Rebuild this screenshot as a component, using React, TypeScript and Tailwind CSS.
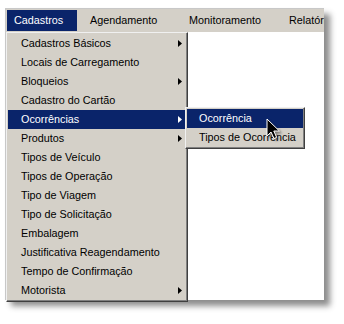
import type { ReactNode } from 'react';

const MENU_ITEMS: { label: string; sub?: boolean }[] = [
  { label: 'Cadastros Básicos', sub: true },
  { label: 'Locais de Carregamento' },
  { label: 'Bloqueios', sub: true },
  { label: 'Cadastro do Cartão' },
  { label: 'Ocorrências', sub: true },
  { label: 'Produtos', sub: true },
  { label: 'Tipos de Veículo' },
  { label: 'Tipos de Operação' },
  { label: 'Tipo de Viagem' },
  { label: 'Tipo de Solicitação' },
  { label: 'Embalagem' },
  { label: 'Justificativa Reagendamento' },
  { label: 'Tempo de Confirmação' },
  { label: 'Motorista', sub: true },
];

const ACTIVE = 4;

const SubArrow = ({ white }: { white?: boolean }): JSX.Element => (
  <svg width="4" height="7" viewBox="0 0 4 7" className="shrink-0">
    <path d="M0 0 L4 3.5 L0 7 Z" fill={white ? '#ffffff' : '#000000'} />
  </svg>
);

const BarItem = ({
  children,
  active,
  className,
}: {
  children: ReactNode;
  active?: boolean;
  className?: string;
}): JSX.Element => (
  <div
    className={
      'my-[1px] flex shrink-0 items-center whitespace-nowrap ' +
      (active ? 'bg-[#0a246a] text-white ' : 'text-black ') +
      (className ?? '')
    }
  >
    {children}
  </div>
);

const Cursor = (): JSX.Element => (
  <svg
    width="15"
    height="22"
    viewBox="0 0 15 22"
    className="absolute left-[260px] top-[109px] drop-shadow-[2px_2px_1px_rgba(0,0,0,0.4)]"
  >
    <path
      d="M1 1 L1 18 L5 14 L8 20.5 L10.6 19.4 L7.8 13 L13.4 13 Z"
      fill="#000000"
      stroke="#ffffff"
      strokeWidth="1"
      strokeLinejoin="round"
    />
  </svg>
);

export default function App(): JSX.Element {
  return (
    <div className="h-[324px] w-[344px] overflow-hidden bg-white pl-[5px] pt-[8px] font-['Liberation_Sans',Arial,sans-serif] text-[10.8px] leading-none">
      <div className="relative h-[292px] w-[319px] border-l border-t border-[#c8c8c8] bg-white shadow-[6px_6px_6px_rgba(0,0,0,0.45)]">
        {/* menu bar */}
        <div className="flex h-[23px] items-stretch overflow-hidden bg-[#d4d0c8]">
          <BarItem active className="ml-[1px] w-[70px] pl-[7px]">
            Cadastros
          </BarItem>
          <BarItem className="w-[99px] pl-[13px]">Agendamento</BarItem>
          <BarItem className="w-[100px] pl-[13px]">Monitoramento</BarItem>
          <BarItem className="pl-[13px]">Relatórios</BarItem>
        </div>

        {/* dropdown */}
        <div className="absolute left-0 top-[23px] w-[182px] border border-b-[#404040] border-l-[#f0f0f0] border-r-[#404040] border-t-[#f0f0f0] bg-[#d4d0c8] p-[1px] shadow-[inset_-1px_-1px_0_#808080]">
          {MENU_ITEMS.map((item, i) => {
            const active = i === ACTIVE;
            return (
              <div
                key={item.label}
                className={
                  'flex h-[19px] items-center justify-between pl-[13px] pr-[4px] ' +
                  (active ? 'bg-[#0a246a] text-white' : 'text-black')
                }
              >
                <span>{item.label}</span>
                {item.sub ? <SubArrow white={active} /> : null}
              </div>
            );
          })}
        </div>

        {/* submenu */}
        <div className="absolute left-[179px] top-[98px] w-[120px] border border-b-[#404040] border-l-[#f0f0f0] border-r-[#404040] border-t-[#f0f0f0] bg-[#d4d0c8] p-[1px] shadow-[inset_-1px_-1px_0_#808080]">
          <div className="flex h-[19px] items-center bg-[#0a246a] pl-[12px] text-white">
            Ocorrência
          </div>
          <div className="flex h-[19px] items-center pl-[12px] text-black">
            Tipos de Ocorrência
          </div>
        </div>

        <Cursor />
      </div>
    </div>
  );
}
